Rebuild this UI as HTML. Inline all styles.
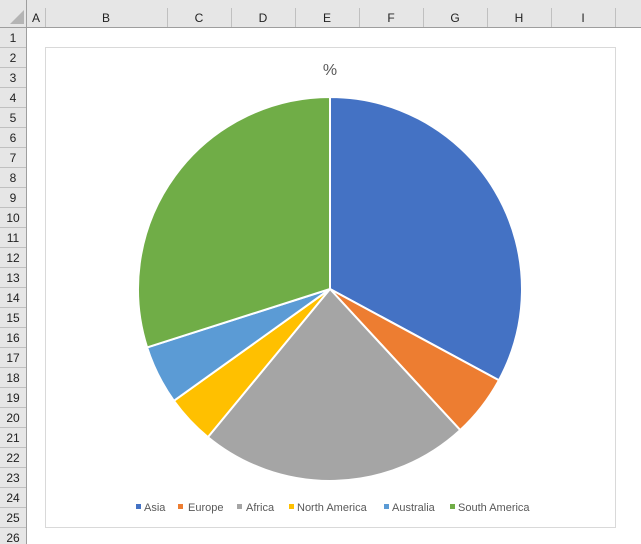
<!DOCTYPE html>
<html><head><style>
html,body{margin:0;padding:0;width:641px;height:544px;overflow:hidden;background:#fff;font-family:"Liberation Sans",sans-serif;}
</style></head><body>
<svg width="641" height="544" xmlns="http://www.w3.org/2000/svg" style="display:block">
<rect x="0" y="0" width="641" height="27" fill="#e6e6e6"/>
<rect x="0" y="0" width="26" height="544" fill="#e6e6e6"/>
<polygon points="10,24 24,24 24,10" fill="#b4b4b4"/>
<line x1="0" y1="27.5" x2="641" y2="27.5" stroke="#9e9e9e"/>
<line x1="26.5" y1="0" x2="26.5" y2="544" stroke="#9e9e9e"/>
<g stroke="#c0c0c0">
<line x1="45.5" y1="8" x2="45.5" y2="27"/><line x1="167.5" y1="8" x2="167.5" y2="27"/><line x1="231.5" y1="8" x2="231.5" y2="27"/><line x1="295.5" y1="8" x2="295.5" y2="27"/><line x1="359.5" y1="8" x2="359.5" y2="27"/><line x1="423.5" y1="8" x2="423.5" y2="27"/><line x1="487.5" y1="8" x2="487.5" y2="27"/><line x1="551.5" y1="8" x2="551.5" y2="27"/><line x1="615.5" y1="8" x2="615.5" y2="27"/>
<line x1="0" y1="47.5" x2="26" y2="47.5"/><line x1="0" y1="67.5" x2="26" y2="67.5"/><line x1="0" y1="87.5" x2="26" y2="87.5"/><line x1="0" y1="107.5" x2="26" y2="107.5"/><line x1="0" y1="127.5" x2="26" y2="127.5"/><line x1="0" y1="147.5" x2="26" y2="147.5"/><line x1="0" y1="167.5" x2="26" y2="167.5"/><line x1="0" y1="187.5" x2="26" y2="187.5"/><line x1="0" y1="207.5" x2="26" y2="207.5"/><line x1="0" y1="227.5" x2="26" y2="227.5"/><line x1="0" y1="247.5" x2="26" y2="247.5"/><line x1="0" y1="267.5" x2="26" y2="267.5"/><line x1="0" y1="287.5" x2="26" y2="287.5"/><line x1="0" y1="307.5" x2="26" y2="307.5"/><line x1="0" y1="327.5" x2="26" y2="327.5"/><line x1="0" y1="347.5" x2="26" y2="347.5"/><line x1="0" y1="367.5" x2="26" y2="367.5"/><line x1="0" y1="387.5" x2="26" y2="387.5"/><line x1="0" y1="407.5" x2="26" y2="407.5"/><line x1="0" y1="427.5" x2="26" y2="427.5"/><line x1="0" y1="447.5" x2="26" y2="447.5"/><line x1="0" y1="467.5" x2="26" y2="467.5"/><line x1="0" y1="487.5" x2="26" y2="487.5"/><line x1="0" y1="507.5" x2="26" y2="507.5"/><line x1="0" y1="527.5" x2="26" y2="527.5"/>
</g>
<g font-size="12" fill="#222" text-anchor="middle">
<text x="36" y="22">A</text><text x="106" y="22">B</text><text x="199" y="22">C</text><text x="263" y="22">D</text><text x="327" y="22">E</text><text x="391" y="22">F</text><text x="455" y="22">G</text><text x="519" y="22">H</text><text x="583" y="22">I</text>
<text x="13" y="42">1</text><text x="13" y="62">2</text><text x="13" y="82">3</text><text x="13" y="102">4</text><text x="13" y="122">5</text><text x="13" y="142">6</text><text x="13" y="162">7</text><text x="13" y="182">8</text><text x="13" y="202">9</text><text x="13" y="222">10</text><text x="13" y="242">11</text><text x="13" y="262">12</text><text x="13" y="282">13</text><text x="13" y="302">14</text><text x="13" y="322">15</text><text x="13" y="342">16</text><text x="13" y="362">17</text><text x="13" y="382">18</text><text x="13" y="402">19</text><text x="13" y="422">20</text><text x="13" y="442">21</text><text x="13" y="462">22</text><text x="13" y="482">23</text><text x="13" y="502">24</text><text x="13" y="522">25</text><text x="13" y="542">26</text>
</g>
<rect x="45.5" y="47.5" width="570" height="480" fill="#fff" stroke="#d9d9d9"/>
<text x="330" y="75" font-size="16" fill="#595959" text-anchor="middle">%</text>
<g stroke="#fff" stroke-width="2" stroke-linejoin="round">
<path d="M330,289 L330,97 A192,192 0 0 1 498.9,380.3 Z" fill="#4472C4"/>
<path d="M330,289 L498.9,380.3 A192,192 0 0 1 460.2,430.1 Z" fill="#ED7D31"/>
<path d="M330,289 L460.2,430.1 A192,192 0 0 1 207.9,437.1 Z" fill="#A5A5A5"/>
<path d="M330,289 L207.9,437.1 A192,192 0 0 1 173.9,400.8 Z" fill="#FFC000"/>
<path d="M330,289 L173.9,400.8 A192,192 0 0 1 147.1,347.4 Z" fill="#5B9BD5"/>
<path d="M330,289 L147.1,347.4 A192,192 0 0 1 330,97 Z" fill="#70AD47"/>
</g>
<g font-size="11" fill="#595959">
<rect x="136" y="504" width="5" height="5" fill="#4472C4"/><text x="144" y="511">Asia</text>
<rect x="178" y="504" width="5" height="5" fill="#ED7D31"/><text x="188" y="511">Europe</text>
<rect x="237" y="504" width="5" height="5" fill="#A5A5A5"/><text x="246" y="511">Africa</text>
<rect x="289" y="504" width="5" height="5" fill="#FFC000"/><text x="297" y="511">North America</text>
<rect x="384" y="504" width="5" height="5" fill="#5B9BD5"/><text x="392" y="511">Australia</text>
<rect x="450" y="504" width="5" height="5" fill="#70AD47"/><text x="458" y="511">South America</text>
</g>
</svg>
</body></html>
